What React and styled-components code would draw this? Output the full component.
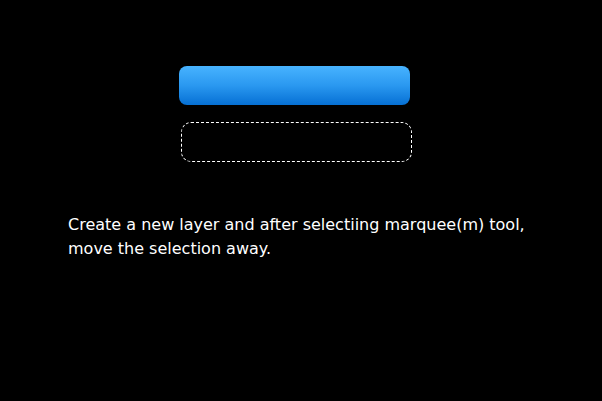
import React from "react";
import styled, { createGlobalStyle } from "styled-components";

const GlobalStyle = createGlobalStyle`
  html, body {
    margin: 0;
    padding: 0;
    background: #000;
  }
`;

const Page = styled.div`
  width: 602px;
  height: 401px;
  background: #000;
  padding-top: 66px;
  box-sizing: border-box;
  display: flex;
  flex-direction: column;
  font-family: "DejaVu Sans", Verdana, sans-serif;
`;

const BlueLayer = styled.div`
  margin-left: 179px;
  width: 231px;
  height: 39px;
  border-radius: 8px;
  background: linear-gradient(to bottom, #47b3ff 0%, #2a98f0 50%, #0670d4 100%);
`;

const Marquee = styled.div`
  margin-left: 181px;
  margin-top: 17px;
  width: 231px;
  height: 40px;
  box-sizing: border-box;
  border: 1px dashed #fff;
  border-radius: 10px;
`;

const Instructions = styled.p`
  margin: 51px 0 0 68px;
  color: #fff;
  font-size: 16px;
  line-height: 24px;
  width: 520px;
`;

const App = () => {
  return (
    <>
      <GlobalStyle />
      <Page>
        <BlueLayer />
        <Marquee />
        <Instructions>
          Create a new layer and after selectiing marquee(m) tool,
          <br />
          move the selection away.
        </Instructions>
      </Page>
    </>
  );
};

export default App;
